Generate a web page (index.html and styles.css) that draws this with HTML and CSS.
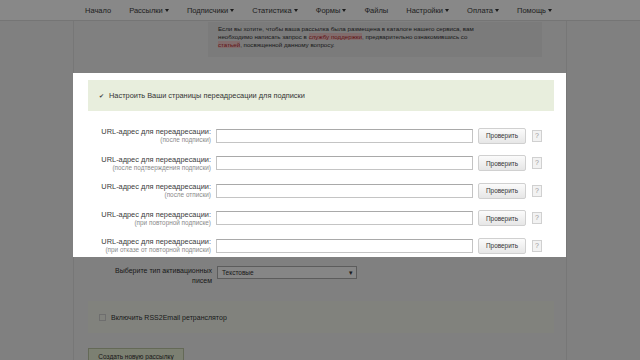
FILE: index.html
```html
<!DOCTYPE html>
<html lang="ru">
  <head>
    <meta charset="UTF-8" />
    <title>Настройки рассылки</title>
    <link rel="stylesheet" href="styles.css">
  </head>
  <body>
    <div class="topnav">
      <a>Начало</a>
      <a>Рассылки <span class="caret"></span></a>
      <a>Подписчики <span class="caret"></span></a>
      <a>Статистика <span class="caret"></span></a>
      <a>Формы <span class="caret"></span></a>
      <a>Файлы</a>
      <a>Настройки <span class="caret"></span></a>
      <a>Оплата <span class="caret"></span></a>
      <a>Помощь <span class="caret"></span></a>
    </div>

    <div class="page">
      <div class="notice">
        Если вы хотите, чтобы ваша рассылка была размещена в каталоге нашего сервиса, вам<br>
        необходимо написать запрос в <span class="red">службу поддержки</span>, предварительно ознакомившись со<br>
        <span class="red">статьей</span>, посвященной данному вопросу.
      </div>

      <div class="spacer"></div>

      <div class="select-row">
        <label class="select-label">Выберите тип активационных<br>писем</label>
        <div class="fake-select">Текстовые <span class="arrow">&#9662;</span></div>
      </div>

      <div class="rss-panel">
        <span class="box"></span> Включить RSS2Email ретранслятор
      </div>

      <button class="create-btn">Создать новую рассылку</button>
    </div>

    <div class="overlay"></div>

    <div class="modal">
      <div class="modal-head">
        <span class="check">&#10004;</span>
        Настроить Ваши страницы переадресации для подписки
      </div>

      <div class="rows">
        <div class="row">
          <div class="lbl">URL-адрес для переадресации:<small>(после подписки)</small></div>
          <input type="text" class="url">
          <button class="check-btn">Проверить</button>
          <span class="help">?</span>
        </div>
        <div class="row">
          <div class="lbl">URL-адрес для переадресации:<small>(после подтверждения подписки)</small></div>
          <input type="text" class="url">
          <button class="check-btn">Проверить</button>
          <span class="help">?</span>
        </div>
        <div class="row">
          <div class="lbl">URL-адрес для переадресации:<small>(после отписки)</small></div>
          <input type="text" class="url">
          <button class="check-btn">Проверить</button>
          <span class="help">?</span>
        </div>
        <div class="row">
          <div class="lbl">URL-адрес для переадресации:<small>(при повторной подписке)</small></div>
          <input type="text" class="url">
          <button class="check-btn">Проверить</button>
          <span class="help">?</span>
        </div>
        <div class="row">
          <div class="lbl">URL-адрес для переадресации:<small>(при отказе от повторной подписки)</small></div>
          <input type="text" class="url">
          <button class="check-btn">Проверить</button>
          <span class="help">?</span>
        </div>
      </div>
    </div>
  </body>
</html>
```

FILE: styles.css
```css
body {
  font-family: "Liberation Sans", Arial, sans-serif;
  background-color: #ececec;
  margin: 0;
  width: 640px;
  height: 360px;
  overflow: hidden;
  color: #333;
}

.topnav {
  height: 20px;
  background-color: #fbfbfb;
  border-bottom: 1px solid #d8d8d8;
  display: flex;
  align-items: center;
  padding-left: 85px;
  font-size: 7.5px;
  color: #3a3a3a;
}
.topnav a {
  margin-right: 18px;
  white-space: nowrap;
}
.caret {
  display: inline-block;
  border-left: 2px solid transparent;
  border-right: 2px solid transparent;
  border-top: 3px solid #333;
  vertical-align: middle;
}

.page {
  margin-left: 73px;
  width: 494px;
  height: 340px;
  border-left: 1px solid #dcdcdc;
  border-right: 1px solid #dcdcdc;
  box-sizing: border-box;
  padding-top: 1px;
}

.notice {
  margin-left: 134px;
  margin-right: 24px;
  background-color: #e3e3e3;
  padding: 3px 10px 8px;
  font-size: 6.2px;
  line-height: 8px;
  color: #333;
  height: 24px;
  white-space: nowrap;
}
.red {
  color: #b5262b;
  background: #f0c8c8;
}

.spacer {
  height: 209px;
}

.select-row {
  display: flex;
  align-items: flex-start;
  gap: 4px;
}
.select-label {
  width: 138px;
  text-align: right;
  font-size: 7px;
  line-height: 10px;
}
.fake-select {
  width: 140px;
  height: 13px;
  margin-left: 1px;
  border: 1px solid #aaa;
  background: #f7f7f7;
  font-size: 6.5px;
  line-height: 11px;
  padding-left: 4px;
  box-sizing: border-box;
  position: relative;
}
.arrow {
  position: absolute;
  right: 3px;
  top: 0;
}

.rss-panel {
  margin: 15px 12px 0 14px;
  height: 32px;
  background: #eef1e8;
  display: flex;
  align-items: center;
  padding-left: 11px;
  font-size: 7px;
  gap: 5px;
}
.box {
  width: 5px;
  height: 5px;
  border: 1px solid #ccc;
}

.create-btn {
  margin: 15px 0 0 14px;
  width: 96px;
  height: 16px;
  font-size: 6.5px;
  border: 1px solid #b9c2a2;
  background: #e6ecd2;
  font-family: inherit;
  color: #333;
}

.overlay {
  position: fixed;
  inset: 0;
  background: rgba(0, 0, 0, 0.46);
}

.modal {
  position: absolute;
  left: 73px;
  top: 73px;
  width: 493px;
  height: 184px;
  background: #fff;
  box-sizing: border-box;
  padding: 7px 12px 0 15px;
}

.modal-head {
  height: 31px;
  background-color: #e8eedd;
  display: flex;
  align-items: center;
  padding-left: 11px;
  font-size: 7.4px;
  color: #333;
  gap: 5px;
}
.check {
  font-size: 6px;
  color: #444;
}

.rows {
  margin-top: 14px;
  display: flex;
  flex-direction: column;
  gap: 6px;
}
.row {
  display: flex;
  align-items: center;
  height: 21.5px;
}
.lbl {
  width: 123px;
  text-align: right;
  font-size: 7.4px;
  line-height: 9px;
  color: #3a3a3a;
  white-space: nowrap;
}
.lbl small {
  display: block;
  font-size: 6.4px;
  line-height: 8px;
  color: #8a8a8a;
}
.url {
  margin-left: 5px;
  width: 257px;
  height: 14px;
  box-sizing: border-box;
  border: 1px solid #c4c4c4;
  border-top-color: #a9a9a9;
  padding: 0;
}
.check-btn {
  margin-left: 5px;
  width: 48px;
  height: 16px;
  font-family: inherit;
  font-size: 6.4px;
  color: #333;
  border: 1px solid #d0d0d0;
  border-radius: 2px;
  background: linear-gradient(#fbfbfb, #e6e6e6);
  padding: 0;
}
.help {
  margin-left: 6px;
  width: 10px;
  height: 12px;
  box-sizing: border-box;
  border: 1px solid #d0d0d0;
  background: #f2f2f2;
  color: #999;
  font-size: 7px;
  text-align: center;
  line-height: 10px;
}
```
